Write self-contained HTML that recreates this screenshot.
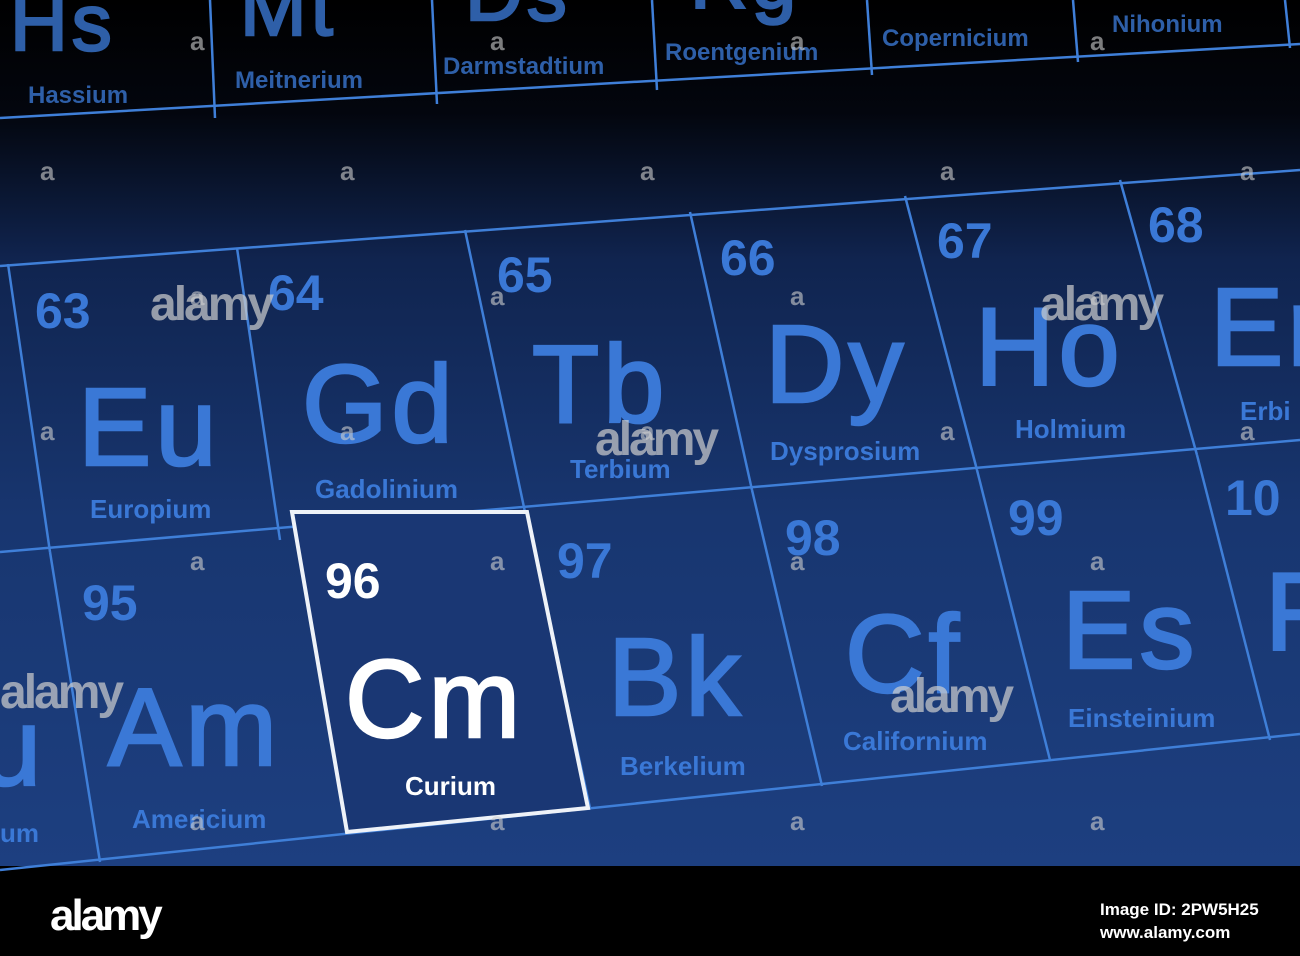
<!DOCTYPE html>
<html><head><meta charset="utf-8"><style>
html,body{margin:0;padding:0;background:#000;}
svg{display:block}
text{font-family:"Liberation Sans",sans-serif}
.b{font-weight:bold}
.n{font-weight:normal}
.sym{font-weight:normal;stroke-width:2.5px;letter-spacing:4px}
</style></head><body>
<svg width="1300" height="956" viewBox="0 0 1300 956" xmlns="http://www.w3.org/2000/svg">
<defs>
<linearGradient id="bg" x1="0" y1="0" x2="0" y2="1">
<stop offset="0" stop-color="#000000"/>
<stop offset="0.13" stop-color="#03060e"/>
<stop offset="0.3" stop-color="#10244f"/>
<stop offset="0.6" stop-color="#183670"/>
<stop offset="1" stop-color="#1d3f80"/>
</linearGradient>
</defs>
<rect width="1300" height="866" fill="url(#bg)"/>
<rect y="866" width="1300" height="90" fill="#000"/>
<g stroke="#3f7fd8" stroke-width="2.5" fill="none">
<line x1="0" y1="118" x2="1300" y2="44"/>
<line x1="210" y1="0" x2="215" y2="118"/>
<line x1="432" y1="0" x2="437" y2="104"/>
<line x1="652" y1="0" x2="657" y2="90"/>
<line x1="867" y1="0" x2="872" y2="75"/>
<line x1="1073" y1="0" x2="1078" y2="62"/>
<line x1="1285" y1="0" x2="1290" y2="48"/>
<line x1="0" y1="266" x2="1300" y2="170"/>
<line x1="0" y1="552" x2="1300" y2="440"/>
<line x1="0" y1="870" x2="1300" y2="734"/>
<line x1="8" y1="264" x2="50" y2="552"/>
<line x1="237" y1="248" x2="280" y2="540"/>
<line x1="465" y1="230" x2="525" y2="512"/>
<line x1="690" y1="212" x2="752" y2="490"/>
<line x1="905" y1="196" x2="977" y2="470"/>
<line x1="1120" y1="180" x2="1197" y2="455"/>
<line x1="50" y1="552" x2="100" y2="862"/>
<line x1="525" y1="512" x2="590" y2="808"/>
<line x1="752" y1="490" x2="822" y2="786"/>
<line x1="977" y1="470" x2="1050" y2="760"/>
<line x1="1197" y1="455" x2="1270" y2="740"/>
</g>
<polygon points="292,512 527,512 588,808 347,832" fill="#1a3774" stroke="#eef2f8" stroke-width="4"/>
<g fill="#2e5fa8" font-size="24" class="b">
<text x="28" y="103">Hassium</text>
<text x="235" y="88">Meitnerium</text>
<text x="443" y="74">Darmstadtium</text>
<text x="665" y="60">Roentgenium</text>
<text x="882" y="46">Copernicium</text>
<text x="1112" y="32">Nihonium</text>
</g>
<g fill="#2e5fa8" stroke="#2e5fa8" font-size="80" class="sym">
<text x="10" y="50">Hs</text>
<text x="240" y="35">Mt</text>
<text x="465" y="20">Ds</text>
<text x="690" y="8">Rg</text>
</g>
<g fill="#3a78d6" class="b" font-size="50">
<text x="35" y="328">63</text>
<text x="268" y="310">64</text>
<text x="497" y="292">65</text>
<text x="720" y="275">66</text>
<text x="937" y="258">67</text>
<text x="1148" y="242">68</text>
<text x="82" y="620">95</text>
<text x="557" y="578">97</text>
<text x="785" y="555">98</text>
<text x="1008" y="535">99</text>
<text x="1225" y="515">10</text>
</g>
<g fill="#3a78d6" stroke="#3a78d6" class="sym" font-size="110">
<text x="78" y="465">Eu</text>
<text x="302" y="442">Gd</text>
<text x="532" y="422">Tb</text>
<text x="765" y="402">Dy</text>
<text x="975" y="385">Ho</text>
<text x="1210" y="365">Er</text>
<text x="108" y="765">Am</text>
<text x="-20" y="785">u</text>
<text x="608" y="715">Bk</text>
<text x="845" y="692">Cf</text>
<text x="1062" y="668">Es</text>
<text x="1265" y="650">F</text>
</g>
<g fill="#3a78d6" class="b" font-size="26">
<text x="90" y="518">Europium</text>
<text x="315" y="498">Gadolinium</text>
<text x="570" y="478">Terbium</text>
<text x="770" y="460">Dysprosium</text>
<text x="1015" y="438">Holmium</text>
<text x="1240" y="420">Erbi</text>
<text x="132" y="828">Americium</text>
<text x="0" y="842">um</text>
<text x="620" y="775">Berkelium</text>
<text x="843" y="750">Californium</text>
<text x="1068" y="727">Einsteinium</text>
</g>
<g fill="#ffffff">
<text x="325" y="598" font-size="50" class="b">96</text>
<text x="345" y="737" font-size="110" class="sym" stroke="#ffffff">Cm</text>
<text x="405" y="795" font-size="26" class="b">Curium</text>
</g>
<g fill="#cfcfcf" opacity="0.7" font-size="48" class="b" style="letter-spacing:-3px">
<text x="150" y="320">alamy</text>
<text x="595" y="455">alamy</text>
<text x="1040" y="320">alamy</text>
<text x="0" y="708">alamy</text>
<text x="890" y="712">alamy</text>
</g>
<g fill="#cfcfcf" opacity="0.6" font-size="26" class="b">
<text x="40" y="180">a</text><text x="340" y="180">a</text><text x="640" y="180">a</text><text x="940" y="180">a</text><text x="1240" y="180">a</text>
<text x="40" y="440">a</text><text x="340" y="440">a</text><text x="640" y="440">a</text><text x="940" y="440">a</text><text x="1240" y="440">a</text>
<text x="190" y="570">a</text><text x="490" y="570">a</text><text x="790" y="570">a</text><text x="1090" y="570">a</text>
<text x="190" y="830">a</text><text x="490" y="830">a</text><text x="790" y="830">a</text><text x="1090" y="830">a</text>
<text x="190" y="50">a</text><text x="490" y="50">a</text><text x="790" y="50">a</text><text x="1090" y="50">a</text>
<text x="190" y="305">a</text><text x="490" y="305">a</text><text x="790" y="305">a</text><text x="1090" y="305">a</text>
</g>
<text x="50" y="930" fill="#fff" font-size="44" class="b" style="letter-spacing:-3px">alamy</text>
<text x="1100" y="915" fill="#fff" font-size="17" class="b">Image ID: 2PW5H25</text>
<text x="1100" y="938" fill="#fff" font-size="17" class="b">www.alamy.com</text>
</svg>
</body></html>
